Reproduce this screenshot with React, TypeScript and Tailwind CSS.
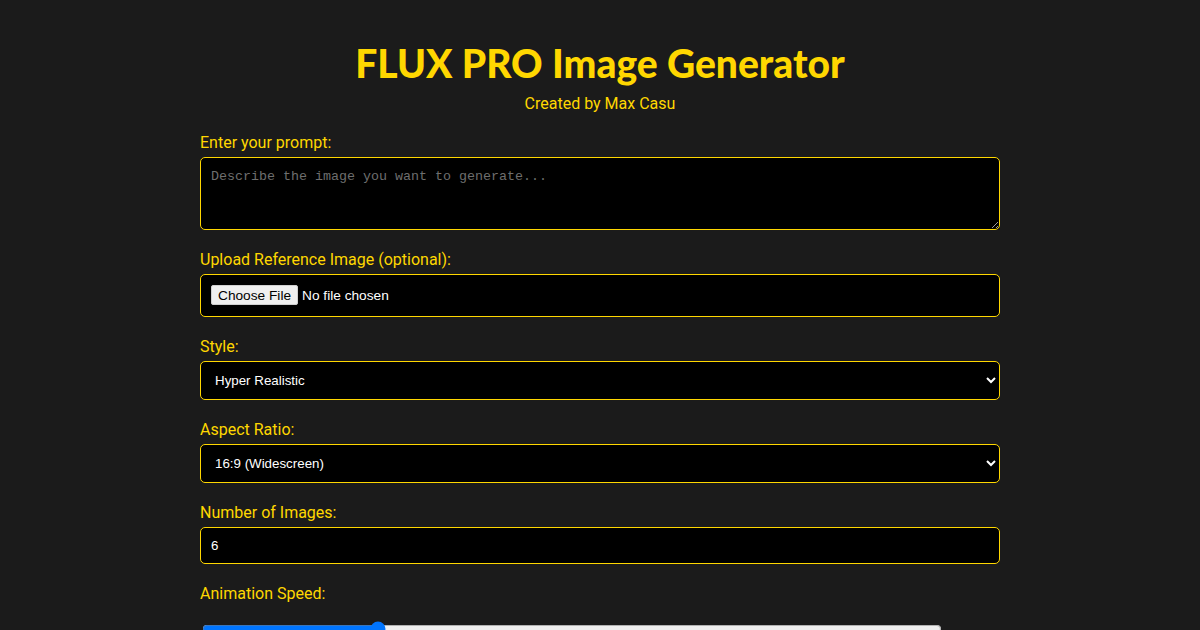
import React, { useState } from "react";

const labelCls = "block mb-[5px] text-[16px] leading-[19px] text-[#ffd700] font-['Roboto',sans-serif]";
const boxCls = "w-full rounded-[5px] border border-[#ffd700] bg-black text-white";
const fieldText = "text-[13.33px] font-['Liberation_Sans',Arial,sans-serif]";

export default function App() {
  const [prompt, setPrompt] = useState("");
  const [style, setStyle] = useState("hyper");
  const [ratio, setRatio] = useState("16:9");
  const [count, setCount] = useState("6");
  const [speed, setSpeed] = useState(24);

  return (
    <div className="min-h-screen bg-[#1b1b1b] font-['Roboto',sans-serif]">
      <div className="mx-auto w-[800px] pt-[39px]">
        <h1 className="text-center text-[39px] leading-[48px] font-black text-[#ffd700] font-['Lato',sans-serif]">
          FLUX PRO Image Generator
        </h1>
        <p className="mt-[7px] text-center text-[16px] leading-[19px] text-[#ffd700]">Created by Max Casu</p>

        <div className="mt-[20px]">
          <label className={labelCls}>Enter your prompt:</label>
          <textarea
            value={prompt}
            onChange={(e) => setPrompt(e.target.value)}
            placeholder="Describe the image you want to generate..."
            className={`${boxCls} block h-[73px] px-[10px] pt-[11px] pb-[10px] text-[13.33px] leading-[16px] font-['Liberation_Mono',monospace] placeholder:text-[#6e6e6e] outline-none`}
          />
        </div>

        <div className="mt-[20px]">
          <label className={labelCls}>Upload Reference Image (optional):</label>
          <div className={`${boxCls} flex h-[43px] items-center px-[10px]`}>
            <input
              type="file"
              className="text-[13.7px] text-white font-['Liberation_Sans',Arial,sans-serif] file:mr-[4px] file:h-[20px] file:rounded-[2px] file:border file:border-[#cfcfcf] file:bg-[#efefef] file:px-[6px] file:text-black"
            />
          </div>
        </div>

        <div className="mt-[20px]">
          <label className={labelCls}>Style:</label>
          <select
            value={style}
            onChange={(e) => setStyle(e.target.value)}
            className={`${boxCls} block h-[39px] px-[10px] ${fieldText} outline-none`}
          >
            <option value="hyper">Hyper Realistic</option>
            <option value="anime">Anime</option>
            <option value="oil">Oil Painting</option>
            <option value="cinematic">Cinematic</option>
          </select>
        </div>

        <div className="mt-[20px]">
          <label className={labelCls}>Aspect Ratio:</label>
          <select
            value={ratio}
            onChange={(e) => setRatio(e.target.value)}
            className={`${boxCls} block h-[39px] px-[10px] ${fieldText} outline-none`}
          >
            <option value="1:1">1:1 (Square)</option>
            <option value="16:9">16:9 (Widescreen)</option>
            <option value="9:16">9:16 (Portrait)</option>
            <option value="4:3">4:3 (Standard)</option>
          </select>
        </div>

        <div className="mt-[20px]">
          <label className={labelCls}>Number of Images:</label>
          <input
            type="number"
            value={count}
            onChange={(e) => setCount(e.target.value)}
            className={`${boxCls} block h-[37px] px-[10px] ${fieldText} outline-none`}
          />
        </div>

        <div className="mt-[20px]">
          <label className={labelCls}>Animation Speed:</label>
          <div className="pt-[12px]">
            <input
              type="range"
              min={1}
              max={100}
              value={speed}
              onChange={(e) => setSpeed(Number(e.target.value))}
              className="ml-[2px] w-[740px]"
            />
          </div>
        </div>
      </div>
    </div>
  );
}
